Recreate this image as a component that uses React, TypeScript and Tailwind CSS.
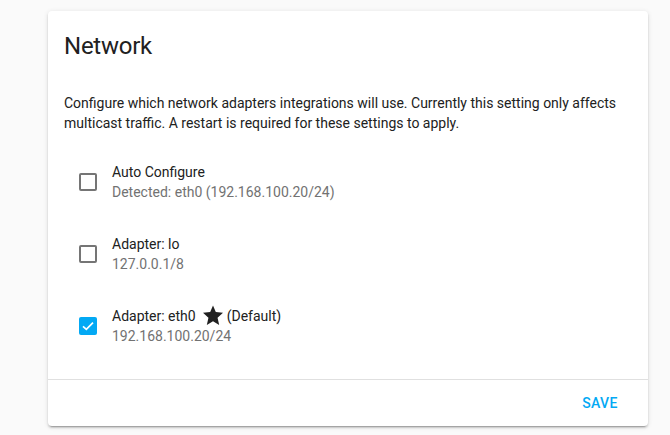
import React from 'react';

type Adapter = {
  name: string;
  detail: string;
  checked: boolean;
  isDefault?: boolean;
};

const adapters: Adapter[] = [
  { name: 'Auto Configure', detail: 'Detected: eth0 (192.168.100.20/24)', checked: false },
  { name: 'Adapter: lo', detail: '127.0.0.1/8', checked: false },
  { name: 'Adapter: eth0', detail: '192.168.100.20/24', checked: true, isDefault: true },
];

function Checkbox({ checked }: { checked: boolean }) {
  if (checked) {
    return (
      <div className="w-[18px] h-[18px] rounded-[2px] bg-[#03a9f4] flex items-center justify-center">
        <svg viewBox="0 0 24 24" className="w-[16px] h-[16px]">
          <path d="M4.5 12.5 L9.5 17 L19.5 7" fill="none" stroke="#fff" strokeWidth="2.6" />
        </svg>
      </div>
    );
  }
  return <div className="w-[18px] h-[18px] rounded-[2px] border-2 border-[#757575] bg-white" />;
}

function StarIcon() {
  return (
    <svg viewBox="0 0 24 24" className="w-6 h-6 shrink-0 ml-[5px] mr-[2px]">
      <path
        fill="#212121"
        d="M12,17.27L18.18,21L16.54,13.64L22,8.63L14.81,8L12,1.5L9.19,8L2,8.63L7.45,13.64L5.82,21L12,17.27Z"
      />
    </svg>
  );
}

export default function App() {
  return (
    <div
      className="min-h-screen bg-[#fafafa] pt-[11px] pl-[48px]"
      style={{ fontFamily: 'Roboto, "Noto Sans", sans-serif' }}
    >
      <div className="w-[600px] bg-white rounded-[4px] shadow-[0_2px_2px_0_rgba(0,0,0,0.14),0_1px_5px_0_rgba(0,0,0,0.12),0_3px_1px_-2px_rgba(0,0,0,0.2)]">
        {/* header */}
        <div className="px-4 pt-[19px] h-[82px]">
          <h1 className="text-[24px] leading-[32px] text-[#212121] tracking-[-0.01em]">Network</h1>
        </div>

        <div className="px-4">
          <p className="text-[14px] leading-[20px] text-[#212121]">
            Configure which network adapters integrations will use. Currently this setting only affects multicast
            traffic. A restart is required for these settings to apply.
          </p>
        </div>

        <div className="mt-[13px] mb-[17px]">
          {adapters.map((a) => (
            <div key={a.name} className="h-[72px] flex items-center pl-[31px]">
              <Checkbox checked={a.checked} />
              <div className="ml-[15px] flex flex-col">
                <div className="flex items-center h-5 text-[14px] leading-[20px] text-[#212121]">
                  <span>{a.name}</span>
                  {a.isDefault && (
                    <>
                      <StarIcon />
                      <span>(Default)</span>
                    </>
                  )}
                </div>
                <div className="text-[14px] leading-[20px] text-[#727272]">{a.detail}</div>
              </div>
            </div>
          ))}
        </div>

        <div className="border-t border-[#e0e0e0] px-4 py-[5px] flex justify-end">
          <button className="h-9 min-w-16 px-2 text-[14px] font-medium uppercase tracking-[0.02em] text-[#03a9f4]">
            Save
          </button>
        </div>
      </div>
    </div>
  );
}
